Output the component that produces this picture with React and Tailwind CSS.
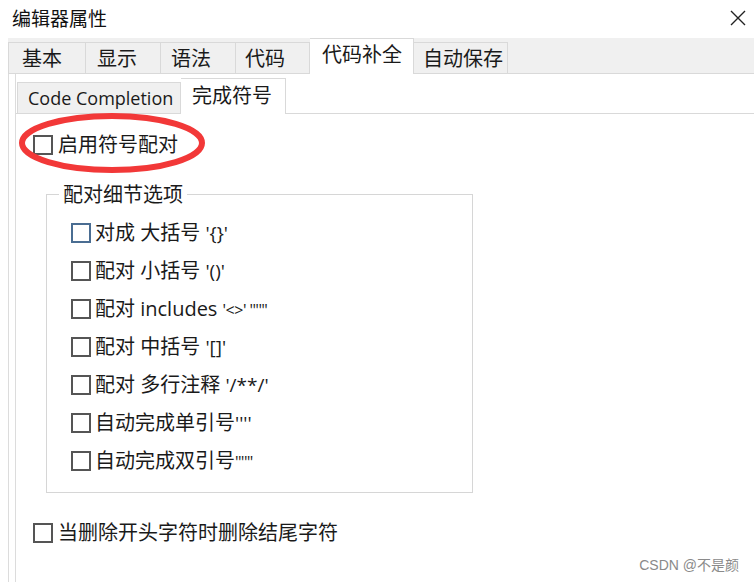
import React from "react";

const CJK = { fontFamily: '"Noto Sans CJK SC", sans-serif' };
const MIX = { fontFamily: '"Open Sans", "Noto Sans CJK SC", sans-serif' };

function Box({ blue }) {
  return (
    <span
      className={
        "block w-[20px] h-[20px] shrink-0 border-2 bg-white " +
        (blue ? "border-[#4a6d92]" : "border-[#555555]")
      }
    />
  );
}

function Row({ label, tail, small, blue }) {
  return (
    <div className="h-[38px] flex items-center gap-[4px]">
      <Box blue={blue} />
      <span className="text-[20px] leading-[24px] text-[#1a1a1a] whitespace-pre" style={MIX}>
        {label}
        {tail ? (
          <span className={small ? "text-[16px] tracking-[-0.5px]" : "text-[19px]"}>{tail}</span>
        ) : null}
      </span>
    </div>
  );
}

const outerTabs = [
  { t: "基本", w: "w-[78px]", pl: "pl-[13px]", first: true },
  { t: "显示", w: "w-[75px]", pl: "pl-[11px]" },
  { t: "语法", w: "w-[75px]", pl: "pl-[10px]" },
  { t: "代码", w: "w-[74px]", pl: "pl-[9px]" },
  { t: "代码补全", w: "w-[104px]", pl: "pl-[12px]", sel: true },
  { t: "自动保存", w: "w-[94px]", pl: "pl-[9px]" },
];

export default function App() {
  return (
    <div className="relative w-[754px] h-[582px] bg-white overflow-hidden flex flex-col">
      {/* title bar */}
      <div className="h-[38px] shrink-0 flex items-center justify-between pl-[12px] pr-[8px]">
        <span className="text-[19px] leading-[24px] text-[#111] -mt-[2px]" style={CJK}>
          编辑器属性
        </span>
        <svg width="16" height="16" viewBox="0 0 16 16" className="-mt-[2px]">
          <path d="M1 1 L15 15 M15 1 L1 15" stroke="#222" strokeWidth="1.4" fill="none" />
        </svg>
      </div>

      {/* outer tab strip */}
      <div className="ml-[8px] h-[36px] shrink-0 bg-[#f0f0f0] border-b border-[#d9d9d9] flex items-end">
        {outerTabs.map((tb) =>
          tb.sel ? (
            <div
              key={tb.t}
              className={`${tb.w} ${tb.pl} h-[36px] -mb-px bg-white border-t border-r border-[#d9d9d9] flex items-center pb-[5px]`}
            >
              <span className="text-[20px] leading-[24px] text-[#1a1a1a] whitespace-nowrap" style={CJK}>
                {tb.t}
              </span>
            </div>
          ) : (
            <div
              key={tb.t}
              className={`${tb.w} ${tb.pl} h-[31px] bg-[#f0f0f0] border-t border-r border-[#d9d9d9] ${
                tb.first ? "border-l" : ""
              } flex items-center`}
            >
              <span className="text-[20px] leading-[24px] text-[#1a1a1a] whitespace-nowrap" style={CJK}>
                {tb.t}
              </span>
            </div>
          )
        )}
      </div>

      {/* outer panel */}
      <div className="ml-[8px] flex-1 border-l border-[#dcdcdc] pl-[6px] flex flex-col">
        <div className="flex-1 border-l border-[#dcdcdc] flex flex-col">
          {/* inner tab strip */}
          <div className="h-[40px] shrink-0 border-b border-[#d9d9d9] flex items-end pl-[1px]">
            <div className="w-[164px] h-[31px] bg-[#f0f0f0] border-t border-l border-r border-[#d9d9d9] flex items-center pl-[10px]">
              <span
                className="text-[18px] leading-[24px] text-[#1a1a1a] whitespace-nowrap"
                style={{ fontFamily: '"Open Sans", sans-serif' }}
              >
                Code Completion
              </span>
            </div>
            <div className="w-[105px] h-[36px] -mb-px bg-white border-t border-r border-[#d9d9d9] flex items-center pl-[11px] pb-[3px]">
              <span className="text-[20px] leading-[24px] text-[#1a1a1a] whitespace-nowrap" style={CJK}>
                完成符号
              </span>
            </div>
          </div>

          {/* inner content */}
          <div className="pl-[17px] pt-[21px] flex flex-col items-start">
            <div className="h-[20px] flex items-center gap-[5px]">
              <Box />
              <span className="text-[20px] leading-[24px] text-[#1a1a1a]" style={MIX}>
                启用符号配对
              </span>
            </div>

            <fieldset className="mt-[27px] ml-[13px] w-[427px] border border-[#d6d6d6] pb-[12px] pl-[24px]">
              <legend className="ml-[-12px] px-[4px] text-[20px] leading-[24px] text-[#1a1a1a]" style={CJK}>
                配对细节选项
              </legend>
              <div className="mt-[8px] flex flex-col">
                <Row label="对成 大括号 " tail="'{}'" blue />
                <Row label="配对 小括号 " tail="'()'" />
                <Row label="配对 includes " tail={"'<>' '\"\"'"} small />
                <Row label="配对 中括号 " tail="'[]'" />
                <Row label="配对 多行注释 " tail="'/**/'" />
                <Row label="自动完成单引号" tail="''''" />
                <Row label="自动完成双引号" tail={"'\"\"'"} small />
              </div>
            </fieldset>

            <div className="mt-[30px] h-[20px] flex items-center gap-[5px]">
              <Box />
              <span className="text-[20px] leading-[24px] text-[#1a1a1a]" style={MIX}>
                当删除开头字符时删除结尾字符
              </span>
            </div>
          </div>
        </div>
      </div>

      {/* red annotation ellipse */}
      <svg
        className="absolute left-[15px] top-[110px] pointer-events-none"
        width="196"
        height="66"
        viewBox="0 0 196 66"
      >
        <ellipse cx="97" cy="33" rx="90" ry="27" fill="none" stroke="#f23838" strokeWidth="6" />
      </svg>

      {/* watermark */}
      <span
        className="absolute right-[15px] bottom-[8px] text-[14px] leading-[18px] text-[#8a8a8a]"
        style={{ fontFamily: '"Liberation Sans", "Noto Sans CJK SC", sans-serif' }}
      >
        CSDN @不是颜
      </span>
    </div>
  );
}
